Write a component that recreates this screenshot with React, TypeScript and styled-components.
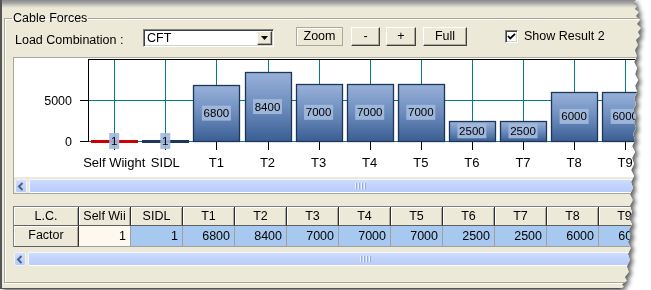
import React from 'react';
import styled, { createGlobalStyle } from 'styled-components';

const GlobalStyle = createGlobalStyle`
  html, body {
    margin: 0;
    padding: 0;
    background: #fff;
  }
  body {
    font-family: "Liberation Sans", Arial, sans-serif;
    font-size: 12.5px;
    color: #000;
  }
`;

/* ragged right edge of the cut-out screenshot */
const TORN: [number, number][] = [
  [636, 0], [633, 3], [637, 6], [635, 9], [639, 12], [636, 16], [640, 20], [637, 24],
  [641, 28], [638, 32], [640, 36], [636, 40], [638, 45], [635, 50], [637, 56], [634, 62],
  [637, 68], [635, 74], [638, 80], [635, 86], [637, 92], [634, 98], [636, 104], [633, 110],
  [636, 116], [634, 122], [636, 128], [633, 134], [635, 140], [632, 146], [635, 152],
  [632, 158], [634, 164], [631, 170], [634, 176], [631, 182], [633, 188], [630, 194],
  [633, 200], [630, 206], [632, 212], [629, 218], [632, 224], [629, 230], [631, 236],
  [628, 242], [631, 248], [628, 254], [630, 260], [627, 266], [629, 272], [625, 277],
  [627, 281], [622, 284], [624, 287], [619, 289],
];
const tornClip =
  'polygon(0 0, ' + TORN.map(([x, y]) => `${x}px ${y}px`).join(', ') + ', 0 289px)';

const Stage = styled.div`
  width: 651px;
  height: 290px;
  overflow: hidden;
  filter: drop-shadow(3px 2px 2px rgba(0, 0, 0, 0.6));
`;

const Window = styled.div`
  box-sizing: border-box;
  width: 651px;
  height: 289px;
  padding: 11px 0 0 2px;
  border-left: 2px solid #555;
  border-bottom: 1px solid #555;
  background: linear-gradient(to bottom, #8a8a8a 0, #a5a5a5 3px, #d6d3c6 6px, #ece9d8 8px);
  overflow: hidden;
  clip-path: ${tornClip};
`;

const GroupBox = styled.fieldset`
  box-sizing: border-box;
  width: 700px;
  margin: 0;
  padding: 0 0 16px 8px;
  min-width: 0;
  border: 1px solid #aca899;
  box-shadow: 1px 1px 0 #fff, inset 1px 1px 0 #fff;
`;

const Caption = styled.legend`
  margin-left: -1px;
  padding: 0 1px;
  line-height: 14px;
`;

const Toolbar = styled.div`
  display: flex;
  align-items: flex-start;
  height: 22px;
  margin-top: 2px;
`;

const FieldLabel = styled.span`
  box-sizing: border-box;
  width: 130px;
  padding-left: 2px;
  margin-top: 6px;
  line-height: 14px;
`;

const Combo = styled.div`
  box-sizing: border-box;
  display: flex;
  align-items: center;
  width: 131px;
  height: 18px;
  margin-top: 2px;
  padding: 0 1px 0 3px;
  background: #fff;
  border-style: solid;
  border-width: 1px;
  border-color: #808080 #fff #fff #808080;
  box-shadow: inset 1px 1px 0 #404040, inset -1px -1px 0 #d4d0c8;
`;

const ComboText = styled.span`
  flex: 1;
  line-height: 14px;
`;

const ComboButton = styled.span`
  box-sizing: border-box;
  display: flex;
  align-items: center;
  justify-content: center;
  width: 15px;
  height: 14px;
  background: #ece9d8;
  border-style: solid;
  border-width: 1px;
  border-color: #fff #404040 #404040 #fff;
  box-shadow: inset -1px -1px 0 #aca899;
`;

const Button = styled.button<{ $flat?: boolean; $w: number; $gap: number }>`
  box-sizing: border-box;
  width: ${(p) => p.$w}px;
  height: 19px;
  margin: 0 0 0 ${(p) => p.$gap}px;
  padding: 0 0 1px;
  font: inherit;
  color: #000;
  background: #ece9d8;
  border-style: solid;
  border-width: 1px;
  border-color: ${(p) => (p.$flat ? '#aca899' : '#fff #404040 #404040 #fff')};
  box-shadow: ${(p) => (p.$flat ? 'inset 1px 1px 0 #fff' : 'inset -1px -1px 0 #aca899')};
  line-height: 15px;
`;

const CheckRow = styled.label`
  display: flex;
  align-items: center;
  gap: 6px;
  margin: 2px 0 0 38px;
  line-height: 14px;
`;

const CheckBox = styled.span`
  box-sizing: border-box;
  display: flex;
  align-items: center;
  justify-content: center;
  width: 13px;
  height: 13px;
  background: #fff;
  border-style: solid;
  border-width: 1px;
  border-color: #808080 #fff #fff #808080;
  box-shadow: inset 1px 1px 0 #404040, inset -1px -1px 0 #d4d0c8;
`;

const ChartPanel = styled.div`
  box-sizing: border-box;
  display: flex;
  flex-direction: column;
  gap: 2px;
  width: 680px;
  height: 137px;
  margin-top: 8px;
  border: 1px solid #aca899;
  border-right: none;
  background: #ece9d8;
`;

const ChartCanvas = styled.div`
  height: 119px;
  background: #fff;
  overflow: hidden;
`;

const ScrollBar = styled.div<{ $top?: number }>`
  display: flex;
  gap: 2px;
  height: 14px;
  margin: ${(p) => p.$top ?? 0}px 0 0 1px;
`;

const ScrollArrow = styled.span`
  box-sizing: border-box;
  display: flex;
  align-items: center;
  justify-content: center;
  width: 14px;
  height: 14px;
  border: 1px solid #eef3ff;
  border-radius: 2px;
  background: linear-gradient(to bottom, #d3e0fd, #b6cbf7);
`;

const ScrollThumb = styled.span`
  box-sizing: border-box;
  display: flex;
  align-items: center;
  justify-content: center;
  gap: 1px;
  width: 826px;
  height: 14px;
  border: 1px solid #f2f6ff;
  border-bottom-color: #fff;
  border-radius: 2px;
  background: linear-gradient(to bottom, #cfdcfd 0, #c3d4fc 40%, #b9ccfa 100%);
`;

const Grip = styled.i`
  width: 1px;
  height: 6px;
  background: #eef3ff;
  box-shadow: 1px 0 0 #8faae4;
  margin-right: 1px;
`;

const Grid = styled.div`
  display: grid;
  grid-template-columns: 65px repeat(11, 52px);
  grid-template-rows: 19px 21px;
  margin-top: 12px;
  border-top: 1px solid #808080;
  border-left: 1px solid #808080;
  width: max-content;
`;

type CellKind = 'head' | 'cream' | 'blue';

const Cell = styled.div<{ $kind: CellKind }>`
  box-sizing: border-box;
  overflow: hidden;
  white-space: nowrap;
  padding: 0 4px;
  text-align: ${(p) => (p.$kind === 'head' ? 'center' : 'right')};
  line-height: ${(p) => (p.$kind === 'head' ? '18px' : '20px')};
  background: ${(p) => (p.$kind === 'head' ? '#ece9d8' : p.$kind === 'cream' ? '#fdf9ee' : '#a7c9ef')};
  border-right: 1px solid ${(p) => (p.$kind === 'head' ? '#303030' : '#a0a0a0')};
  border-bottom: 1px solid ${(p) => (p.$kind === 'head' ? '#606060' : '#a0a0a0')};
  box-shadow: ${(p) => (p.$kind === 'head' ? 'inset 1px 1px 0 #fff, inset -1px 0 0 #aca899' : 'none')};
`;

type Item = { name: string; head: string; value: number };

const ITEMS: Item[] = [
  { name: 'Self Wiight', head: 'Self Wii', value: 1 },
  { name: 'SIDL', head: 'SIDL', value: 1 },
  { name: 'T1', head: 'T1', value: 6800 },
  { name: 'T2', head: 'T2', value: 8400 },
  { name: 'T3', head: 'T3', value: 7000 },
  { name: 'T4', head: 'T4', value: 7000 },
  { name: 'T5', head: 'T5', value: 7000 },
  { name: 'T6', head: 'T6', value: 2500 },
  { name: 'T7', head: 'T7', value: 2500 },
  { name: 'T8', head: 'T8', value: 6000 },
  { name: 'T9', head: 'T9', value: 6000 },
];

const PLOT_L = 88;
const PLOT_T = 59;
const PLOT_B = 141;
const PLOT_R = 720;
const TEAL = '#008080';
const FONT = 'Liberation Sans, Arial, sans-serif';

const cx = (i: number) => 114.2 + 51.1 * i;
const yOf = (v: number) => PLOT_B - (v * (PLOT_B - PLOT_T)) / 10000;

const ForceChart = () => (
  <svg width={700} height={119} viewBox="14 58 700 119" display="block">
    <defs>
      <linearGradient id="barFill" x1="0" y1="0" x2="0" y2="1">
        <stop offset="0" stopColor="#98b1d9" />
        <stop offset="0.5" stopColor="#6c8cbd" />
        <stop offset="1" stopColor="#3a5e93" />
      </linearGradient>
    </defs>
    <g shapeRendering="crispEdges">
      {ITEMS.map((it, i) => (
        <line key={it.name} x1={Math.round(cx(i)) + 0.5} y1={PLOT_T} x2={Math.round(cx(i)) + 0.5} y2={PLOT_B} stroke={TEAL} />
      ))}
      <line x1={PLOT_L} y1={100.5} x2={PLOT_R} y2={100.5} stroke={TEAL} />
      <line x1={PLOT_L} y1={PLOT_B + 0.5} x2={PLOT_R} y2={PLOT_B + 0.5} stroke={TEAL} />
      <line x1={PLOT_L} y1={PLOT_T + 0.5} x2={PLOT_R} y2={PLOT_T + 0.5} stroke="#000" />
      <line x1={PLOT_L + 0.5} y1={PLOT_T} x2={PLOT_L + 0.5} y2={PLOT_B + 1} stroke="#000" />
      <line x1={80} y1={100.5} x2={PLOT_L} y2={100.5} stroke="#000" />
      <line x1={80} y1={PLOT_B + 0.5} x2={PLOT_L} y2={PLOT_B + 0.5} stroke="#000" />
      {ITEMS.map((it, i) => (
        <line key={it.name} x1={Math.round(cx(i)) + 0.5} y1={PLOT_B + 1} x2={Math.round(cx(i)) + 0.5} y2={150} stroke="#000" />
      ))}
    </g>
    <text x={72} y={104.5} fontSize={12.5} textAnchor="end" fontFamily={FONT}>5000</text>
    <text x={72} y={145.5} fontSize={12.5} textAnchor="end" fontFamily={FONT}>0</text>
    {ITEMS.map((it, i) => {
      const x = Math.round(cx(i) - 23);
      const top = yOf(it.value);
      const small = it.value < 100;
      const bw = small ? 10 : 29;
      const bh = small ? 16 : 15;
      const mid = small ? PLOT_B : (top + PLOT_B) / 2;
      return (
        <g key={it.name}>
          {small ? (
            <rect x={x} y={PLOT_B - 1} width={47} height={2.5} fill={i === 0 ? '#cc0000' : '#1d3659'} shapeRendering="crispEdges" />
          ) : (
            <rect x={x + 0.5} y={Math.round(top) + 0.5} width={46} height={PLOT_B - Math.round(top)} fill="url(#barFill)" stroke="#1d3659" strokeWidth={1.3} />
          )}
          <rect x={cx(i) - bw / 2} y={mid - bh / 2} width={bw} height={bh} fill="#a3badc" fillOpacity={0.92} />
          <text x={cx(i)} y={mid + 4} fontSize={11.5} textAnchor="middle" fontFamily={FONT}>{it.value}</text>
          <text x={cx(i)} y={166.5} fontSize={13} textAnchor="middle" fontFamily={FONT}>{it.name}</text>
        </g>
      );
    })}
  </svg>
);

const HScroll = ({ top }: { top?: number }) => (
  <ScrollBar $top={top}>
    <ScrollArrow>
      <svg width="8" height="9" viewBox="0 0 8 9">
        <polyline points="5.5,1 2,4.5 5.5,8" fill="none" stroke="#4d6185" strokeWidth="2" />
      </svg>
    </ScrollArrow>
    <ScrollThumb>
      <Grip />
      <Grip />
      <Grip />
      <Grip />
    </ScrollThumb>
  </ScrollBar>
);

export default function App() {
  return (
    <>
      <GlobalStyle />
      <Stage>
        <Window>
          <GroupBox>
            <Caption>Cable Forces</Caption>
            <Toolbar>
              <FieldLabel>Load Combination :</FieldLabel>
              <Combo>
                <ComboText>CFT</ComboText>
                <ComboButton>
                  <svg width="7" height="4" viewBox="0 0 7 4">
                    <polygon points="0,0 7,0 3.5,4" fill="#000" />
                  </svg>
                </ComboButton>
              </Combo>
              <Button $flat $w={47} $gap={22}>Zoom</Button>
              <Button $w={29} $gap={8}>-</Button>
              <Button $w={30} $gap={6}>+</Button>
              <Button $w={44} $gap={7}>Full</Button>
              <CheckRow>
                <CheckBox>
                  <svg width="9" height="9" viewBox="0 0 9 9">
                    <polyline points="1,4 3.3,6.5 8,1.8" fill="none" stroke="#000" strokeWidth="1.8" />
                  </svg>
                </CheckBox>
                Show Result 2
              </CheckRow>
            </Toolbar>
            <ChartPanel>
              <ChartCanvas>
                <ForceChart />
              </ChartCanvas>
              <HScroll />
            </ChartPanel>
            <Grid>
              <Cell $kind="head">L.C.</Cell>
              {ITEMS.map((it) => (
                <Cell key={it.name} $kind="head">{it.head}</Cell>
              ))}
              <Cell $kind="head">Factor</Cell>
              {ITEMS.map((it, i) => (
                <Cell key={it.name} $kind={i === 0 ? 'cream' : 'blue'}>{it.value}</Cell>
              ))}
            </Grid>
            <HScroll top={5} />
          </GroupBox>
        </Window>
      </Stage>
    </>
  );
}
